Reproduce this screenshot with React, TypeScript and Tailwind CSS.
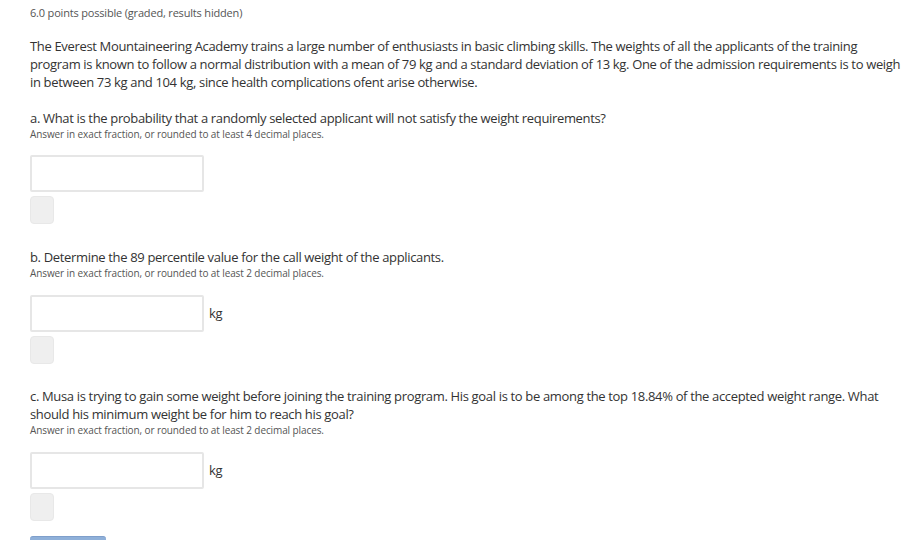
import React from "react";

const font = { fontFamily: '"Open Sans", "Noto Sans", sans-serif' };

function Hint({ children }: { children: React.ReactNode }) {
  return <div className="text-[10px] leading-[14px] tracking-[-0.1px] text-[#555] whitespace-nowrap">{children}</div>;
}

function Answer({ unit }: { unit?: string }) {
  return (
    <div className="flex flex-col gap-[4px]">
      <div className="flex items-center">
        <div className="w-[174px] h-[37px] rounded-[2px] border-2 border-[#e6e6e6] bg-white" />
        {unit && <span className="ml-[5px] text-[13px] tracking-[-0.3px] text-[#333]">{unit}</span>}
      </div>
      <div className="w-[24px] h-[28px] rounded-[4px] bg-[#efefef] border border-[#e8e8e8]" />
    </div>
  );
}

export default function App() {
  return (
    <div className="w-[921px] h-[540px] overflow-hidden bg-white pl-[30px] pt-[5px] text-[#333]" style={font}>
      <div className="text-[11px] leading-[16px] tracking-[-0.18px] text-[#555]">6.0 points possible (graded, results hidden)</div>
      <p className="mt-[16px] text-[13px] leading-[18px] tracking-[-0.34px] whitespace-nowrap">
        The Everest Mountaineering Academy trains a large number of enthusiasts in basic climbing skills. The weights of all the applicants of the training
        <br />
        program is known to follow a normal distribution with a mean of 79 kg and a standard deviation of 13 kg. One of the admission requirements is to weigh
        <br />
        in between 73 kg and 104 kg, since health complications ofent arise otherwise.
      </p>

      <div className="mt-[18px] text-[13px] leading-[18px] tracking-[-0.34px] whitespace-nowrap">
        a. What is the probability that a randomly selected applicant will not satisfy the weight requirements?
      </div>
      <Hint>Answer in exact fraction, or rounded to at least 4 decimal places.</Hint>
      <div className="mt-[14px]">
        <Answer />
      </div>

      <div className="mt-[24px] text-[13px] leading-[18px] tracking-[-0.34px] whitespace-nowrap">
        b. Determine the 89 percentile value for the call weight of the applicants.
      </div>
      <Hint>Answer in exact fraction, or rounded to at least 2 decimal places.</Hint>
      <div className="mt-[15px]">
        <Answer unit="kg" />
      </div>

      <div className="mt-[23px] text-[13px] leading-[18px] tracking-[-0.34px] whitespace-nowrap">
        c. Musa is trying to gain some weight before joining the training program. His goal is to be among the top 18.84% of the accepted weight range. What
        <br />
        should his minimum weight be for him to reach his goal?
      </div>
      <Hint>Answer in exact fraction, or rounded to at least 2 decimal places.</Hint>
      <div className="mt-[15px]">
        <Answer unit="kg" />
      </div>

      <div className="mt-[15px] w-[76px] h-[20px] rounded-t-[3px] bg-[#8fb0d9] border-t border-[#7f9fcb]" />
    </div>
  );
}
